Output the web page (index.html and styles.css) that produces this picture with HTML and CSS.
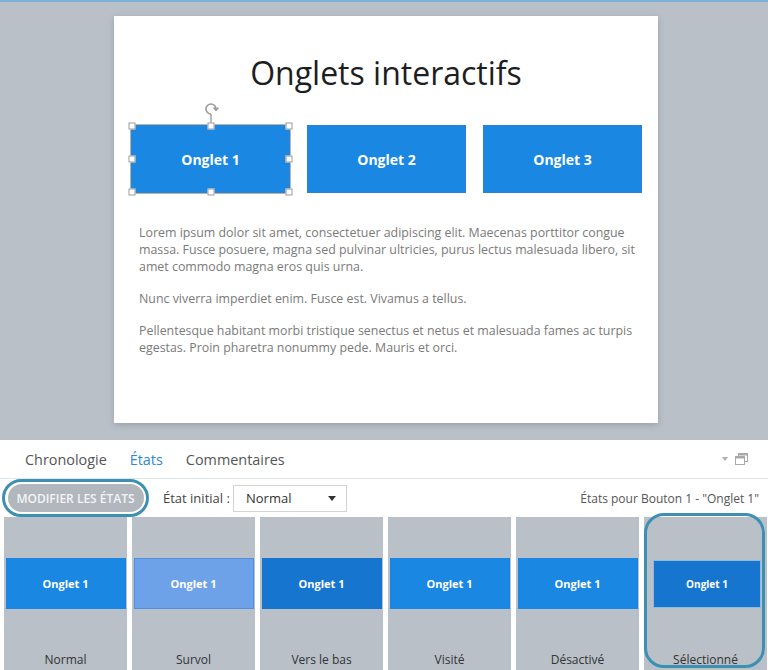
FILE: index.html
```html
<!DOCTYPE html>
<html lang="fr">

<head>
	<meta charset="UTF-8">
	<title>Onglets interactifs</title>
	<link rel="stylesheet" href="styles.css">
</head>

<body>
	<div class="topline"></div>

	<!-- zone de travail avec la diapositive -->
	<div class="stage">
		<div class="slide">
			<h1 class="title">Onglets interactifs</h1>
			<div class="tabs">
				<div class="tab selected">
					Onglet 1
					<svg class="rotate" width="20" height="22" viewBox="0 0 20 22">
						<path d="M10 13 A5 5 0 1 1 15 8" fill="none" stroke="#9a9a9a" stroke-width="1.6" />
						<path d="M12.6 6.4 L15 9.2 L17.4 6.4" fill="none" stroke="#9a9a9a" stroke-width="1.6" />
						<line x1="10" y1="13" x2="10" y2="22" stroke="#9a9a9a" stroke-width="1.4" />
					</svg>
					<span class="handle h-tl"></span>
					<span class="handle h-tc"></span>
					<span class="handle h-tr"></span>
					<span class="handle h-ml"></span>
					<span class="handle h-mr"></span>
					<span class="handle h-bl"></span>
					<span class="handle h-bc"></span>
					<span class="handle h-br"></span>
				</div>
				<div class="tab">Onglet 2</div>
				<div class="tab">Onglet 3</div>
			</div>
			<div class="copy">
				<p>Lorem ipsum dolor sit amet, consectetuer adipiscing elit. Maecenas porttitor congue massa. Fusce posuere, magna sed pulvinar ultricies, purus lectus malesuada libero, sit amet commodo magna eros quis urna.</p>
				<p>Nunc viverra imperdiet enim. Fusce est. Vivamus a tellus.</p>
				<p>Pellentesque habitant morbi tristique senectus et netus et malesuada fames ac turpis egestas. Proin pharetra nonummy pede. Mauris et orci.</p>
			</div>
		</div>
	</div>

	<!-- panneau des états -->
	<div class="panel">
		<div class="panel-head">
			<nav class="panel-tabs">
				<span>Chronologie</span>
				<span class="active">États</span>
				<span>Commentaires</span>
			</nav>
			<div class="panel-tools">
				<span class="tiny-caret"></span>
				<svg width="13" height="12" viewBox="0 0 13 12">
					<rect x="3.5" y="0.5" width="9" height="8" fill="#fff" stroke="#a9a9a9" />
					<rect x="3.5" y="0.5" width="9" height="2" fill="#a9a9a9" />
					<rect x="0.5" y="3.5" width="9" height="8" fill="#fff" stroke="#a9a9a9" />
					<rect x="0.5" y="3.5" width="9" height="2" fill="#a9a9a9" />
				</svg>
			</div>
		</div>

		<div class="toolbar">
			<span class="edit-ring"><span class="edit-btn">MODIFIER LES ÉTATS</span></span>
			<span class="initial-label">État initial :</span>
			<div class="select">Normal<span class="select-caret"></span></div>
			<span class="states-for">États pour Bouton 1 - "Onglet 1"</span>
		</div>

		<div class="states">
			<div class="state"><div class="mini">Onglet 1</div><span class="state-name">Normal</span></div>
			<div class="state"><div class="mini hover">Onglet 1</div><span class="state-name">Survol</span></div>
			<div class="state"><div class="mini down">Onglet 1</div><span class="state-name">Vers le bas</span></div>
			<div class="state"><div class="mini">Onglet 1</div><span class="state-name">Visité</span></div>
			<div class="state"><div class="mini">Onglet 1</div><span class="state-name">Désactivé</span></div>
			<div class="state current"><div class="mini chosen">Onglet 1</div><span class="state-name">Sélectionné</span></div>
		</div>
	</div>
</body>

</html>
```

FILE: styles.css
```css
* {
	margin: 0;
	padding: 0;
	box-sizing: border-box;
}

body {
	width: 768px;
	height: 670px;
	overflow: hidden;
	background: #fff;
	font-family: "Open Sans", "Noto Sans", sans-serif;
}

.topline {
	height: 2px;
	background: #7db0dc;
}

.stage {
	height: 438px;
	padding: 14px 0 0 114px;
	background: #b9c0c8;
}

.slide {
	width: 544px;
	height: 407px;
	padding-top: 37px;
	background: #fff;
	box-shadow: 0 2px 6px rgba(60, 70, 85, 0.25);
}

.title {
	font-size: 32px;
	line-height: 40px;
	font-weight: 400;
	color: #1e1e1e;
	text-align: center;
}

.tabs {
	display: flex;
	gap: 17px;
	margin-top: 32px;
	padding-left: 17px;
}

.tab {
	position: relative;
	width: 159px;
	height: 68px;
	display: flex;
	align-items: center;
	justify-content: center;
	background: #1a87e3;
	border: 1px solid #2a84d2;
	color: #fff;
	font-size: 14px;
	font-weight: 700;
}

.tab.selected {
	outline: 1px solid #b4b4b4;
}

/* poignées de sélection */
.handle {
	position: absolute;
	width: 7px;
	height: 7px;
	background: #fff;
	border: 1px solid #9c9c9c;
	transform: translate(-50%, -50%);
}

.h-tl { left: 0; top: 0; }
.h-tc { left: 50%; top: 0; }
.h-tr { left: 100%; top: 0; }
.h-ml { left: 0; top: 50%; }
.h-mr { left: 100%; top: 50%; }
.h-bl { left: 0; top: 100%; }
.h-bc { left: 50%; top: 100%; }
.h-br { left: 100%; top: 100%; }

.rotate {
	position: absolute;
	left: 50%;
	top: -25px;
	margin-left: -10px;
}

.copy {
	margin-top: 31px;
	padding: 0 8px 0 25px;
	font-size: 12.4px;
	line-height: 17px;
	color: #7a7a7a;
}

.copy p + p {
	margin-top: 15px;
}

/* panneau du bas */
.panel {
	height: 230px;
	background: #fff;
}

.panel-head {
	height: 39px;
	display: flex;
	align-items: center;
	justify-content: space-between;
	border-bottom: 1px solid #dfe6ec;
	padding: 0 20px 0 25px;
}

.panel-tabs {
	display: flex;
	gap: 23px;
	font-size: 14.4px;
	color: #555;
}

.panel-tabs .active {
	color: #2a8ad8;
}

.panel-tools {
	display: flex;
	align-items: center;
	gap: 7px;
}

.tiny-caret {
	width: 0;
	height: 0;
	border-left: 3.5px solid transparent;
	border-right: 3.5px solid transparent;
	border-top: 4px solid #b0b0b0;
}

.toolbar {
	height: 38px;
	display: flex;
	align-items: center;
	font-size: 13px;
	color: #444;
}

.edit-ring {
	margin-left: 2px;
	width: 147px;
	height: 38px;
	display: flex;
	align-items: center;
	justify-content: center;
	border: 3px solid #3e90b3;
	border-radius: 19px;
}

.edit-btn {
	width: 136px;
	height: 28px;
	display: flex;
	align-items: center;
	justify-content: center;
	border-radius: 14px;
	background: #b1b7bd;
	color: #f2f4f6;
	font-size: 12px;
	font-weight: 600;
}

.initial-label {
	width: 70px;
	margin-left: 14px;
}

.select {
	width: 114px;
	height: 27px;
	display: flex;
	align-items: center;
	justify-content: space-between;
	padding: 0 10px 0 12px;
	border: 1px solid #d3d3d3;
	color: #333;
}

.select-caret {
	width: 0;
	height: 0;
	border-left: 4px solid transparent;
	border-right: 4px solid transparent;
	border-top: 5px solid #333;
}

.states-for {
	margin-left: auto;
	padding-right: 9px;
	font-size: 12px;
	color: #555;
}

.states {
	display: flex;
	gap: 5px;
	padding-left: 4px;
}

.state {
	position: relative;
	width: 123px;
	height: 153px;
	flex-shrink: 0;
	display: flex;
	flex-direction: column;
	align-items: center;
	background: #b9c0c7;
}

.mini {
	width: 120px;
	height: 51px;
	margin-top: 41px;
	display: flex;
	align-items: center;
	justify-content: center;
	background: #1a87e3;
	color: #fff;
	font-size: 11px;
	font-weight: 700;
}

.mini.hover {
	background: #6ea2e8;
	border: 1px solid #4f8fe0;
}

.mini.down {
	background: #1676cf;
}

.mini.chosen {
	width: 106px;
	height: 46px;
	margin-top: 44px;
	margin-left: 3px;
	background: #1676cf;
	outline: 1px solid #8cbbe4;
	font-size: 10px;
}

.state.current::after {
	content: "";
	position: absolute;
	top: -4px;
	left: 0;
	right: 2px;
	bottom: 2px;
	border: 3px solid #3e90b3;
	border-radius: 20px;
}

.state-name {
	margin-top: auto;
	padding-bottom: 2px;
	font-size: 12px;
	line-height: 16px;
	color: #333;
}
```
